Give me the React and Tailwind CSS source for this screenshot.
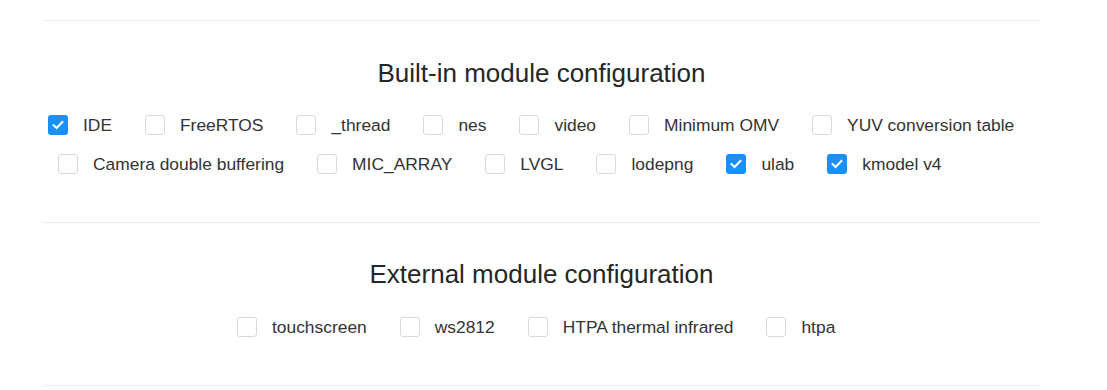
const builtinRows = [
  {
    pad: "pl-[6px]",
    items: [
      { label: "IDE", checked: true },
      { label: "FreeRTOS" },
      { label: "_thread" },
      { label: "nes" },
      { label: "video" },
      { label: "Minimum OMV" },
      { label: "YUV conversion table" },
    ],
  },
  {
    pad: "pl-[16px]",
    items: [
      { label: "Camera double buffering" },
      { label: "MIC_ARRAY" },
      { label: "LVGL" },
      { label: "lodepng" },
      { label: "ulab", checked: true },
      { label: "kmodel v4", checked: true },
    ],
  },
];

const externalItems = [
  { label: "touchscreen" },
  { label: "ws2812" },
  { label: "HTPA thermal infrared" },
  { label: "htpa" },
];

function CheckItem({ label, checked }) {
  return (
    <label className="flex shrink-0 items-center mr-[33px] last:mr-0 cursor-pointer">
      {checked ? (
        <span className="flex items-center justify-center w-[20px] h-[20px] rounded-[3px] bg-[#1890ff]">
          <svg width="12" height="10" viewBox="0 0 12 10">
            <path
              d="M1.6 5.2 L4.6 8 L10.4 2"
              fill="none"
              stroke="white"
              strokeWidth="2"
              strokeLinecap="square"
            />
          </svg>
        </span>
      ) : (
        <span className="w-[20px] h-[20px] rounded-[3px] border border-[#d9d9d9] bg-white" />
      )}
      <span className="ml-[15px] whitespace-nowrap text-[17.4px] leading-[20px] text-[#333]">
        {label}
      </span>
    </label>
  );
}

export default function App() {
  return (
    <div
      className="w-[1107px] h-[390px] bg-white overflow-hidden"
      style={{ fontFamily: '"Liberation Sans", Arial, sans-serif' }}
    >
      <div className="ml-[42px] mr-[66px] mt-[20px] border-t border-[#ededed]">
        <div className="pb-[48px] border-b border-[#ededed]">
          <h2 className="text-center text-[26px] text-[#262626] pt-[38px] pb-[28px] leading-[28px]">
            Built-in module configuration
          </h2>
          <div className="flex flex-col gap-[19px]">
            {builtinRows.map((row, i) => (
              <div key={i} className={`flex items-center ${row.pad}`}>
                {row.items.map((item) => (
                  <CheckItem key={item.label} {...item} />
                ))}
              </div>
            ))}
          </div>
        </div>
        <div className="pb-[48px] border-b border-[#ededed]">
          <h2 className="text-center text-[26px] text-[#262626] pt-[37px] pb-[29px] leading-[28px]">
            External module configuration
          </h2>
          <div className="flex items-center pl-[195px]">
            {externalItems.map((item) => (
              <CheckItem key={item.label} {...item} />
            ))}
          </div>
        </div>
      </div>
    </div>
  );
}
